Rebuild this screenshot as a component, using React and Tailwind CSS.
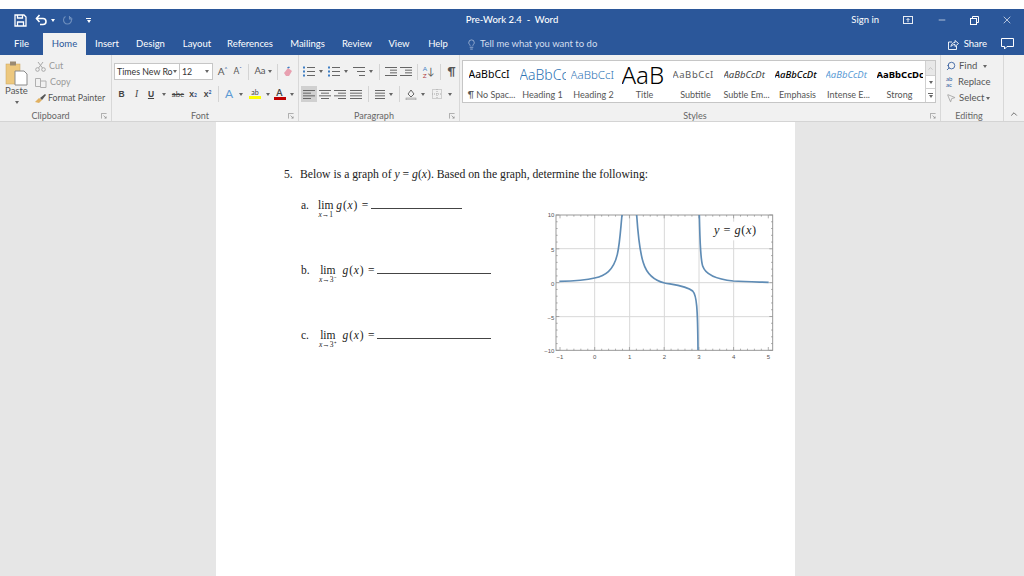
import React from "react";
import { Lightbulb, Search, MousePointer2, ChevronUp, X, Minus } from "lucide-react";

const tabs = [
    ["File", "w-[43px]"],
    ["Home", "w-[43px]"],
    ["Insert", "w-[42px]"],
    ["Design", "w-[45px]"],
    ["Layout", "w-[48px]"],
    ["References", "w-[58px]"],
    ["Mailings", "w-[57px]"],
    ["Review", "w-[42px]"],
    ["View", "w-[42px]"],
    ["Help", "w-[36px]"],
];

const styles = [
    { label: "¶ No Spac...", preview: "AaBbCcI", cls: "text-[10.5px] text-black" },
    { label: "Heading 1", preview: "AaBbCc", cls: "text-[14px] font-light text-[#2e74b5]" },
    { label: "Heading 2", preview: "AaBbCcI", cls: "text-[11.5px] font-light text-[#2e74b5]" },
    { label: "Title", preview: "AaB", cls: "text-[24px] font-light text-black" },
    { label: "Subtitle", preview: "AaBbCcI", cls: "text-[9.5px] tracking-[0.6px] text-[#5a5a5a]" },
    { label: "Subtle Em...", preview: "AaBbCcDt", cls: "text-[9.5px] italic text-[#404040]" },
    { label: "Emphasis", preview: "AaBbCcDt", cls: "text-[9.5px] italic text-black font-medium" },
    { label: "Intense E...", preview: "AaBbCcDt", cls: "text-[9.5px] italic text-[#5b9bd5]" },
    { label: "Strong", preview: "AaBbCcDc", cls: "text-[9.5px] font-bold text-black" },
];

// little stack of text lines, used for the paragraph buttons
function Lines({ widths, align = "left", bullets = false, color = "#666" }) {
    return (
        <svg width="12" height="11" viewBox="0 0 12 11">
            {widths.map((w, i) => {
                const y = 1.5 + i * (8 / (widths.length - 1));
                const x = align === "center" ? (12 - w) / 2 : align === "right" ? 12 - w : 0;
                return <line key={i} x1={bullets ? 4 : x} x2={bullets ? 12 : x + w} y1={y} y2={y} stroke={color} strokeWidth="1" />;
            })}
            {bullets && widths.map((w, i) => (
                <rect key={i} x="0" y={0.5 + i * (8 / (widths.length - 1))} width="2" height="2" fill="#3f7fc4" />
            ))}
        </svg>
    );
}

function Caret({ className = "" }) {
    return <span className={"block w-0 h-0 border-x-[2px] border-t-[3px] border-x-transparent border-t-[#666] " + className}></span>;
}

function Launcher() {
    return (
        <svg width="6" height="6" viewBox="0 0 7 7" fill="none" stroke="#8a8a8a" strokeWidth="0.8">
            <path d="M0.5 6.5v-6h6" />
            <path d="M3 3l3 3M6 4v2H4" />
        </svg>
    );
}

function Cell({ w, children, className = "" }) {
    return <div className={"flex items-center justify-center shrink-0 " + w + " " + className}>{children}</div>;
}

function Sep() {
    return <div className="w-px h-[16px] bg-[#d4d4d4] shrink-0"></div>;
}

function GroupLabel({ name, launcher = true, pad = "pr-[12px]" }) {
    return (
        <div className={"h-[13px] pt-[2px] flex items-center relative text-[9px] text-[#666] justify-center " + pad}>
            {name}
            {launcher && <span className="absolute right-[4px] top-[5px]"><Launcher /></span>}
        </div>
    );
}

function Lim({ sub, mx }) {
    return (
        <span className={"inline-flex flex-col items-center leading-none " + mx}>
            <span className="text-[11.5px]">lim</span>
            <span className="text-[7.5px] -mt-[1px]"><i>x</i>{sub}</span>
        </span>
    );
}

function Question({ letter, sub, line, labelW, mx }) {
    return (
        <div className="flex items-start h-[65px]">
            <span className={"text-[11.5px] leading-none " + labelW}>{letter}</span>
            <Lim sub={sub} mx={mx} />
            <span className="text-[11.5px] leading-none whitespace-nowrap tracking-[0.8px]">
                <i>g</i>(<i>x</i>) =
            </span>
            <span className={"border-b border-[#444] h-[9px] " + line}></span>
        </div>
    );
}

function Graph() {
    const xs = [194, 299, 403, 507, 611];
    const ys = [143, 245, 347];
    const xTicks = [["−1", 90], ["0", 194], ["1", 299], ["2", 403], ["3", 507], ["4", 611], ["5", 715]];
    const yTicks = [["10", 44], ["5", 147], ["0", 249], ["−5", 351], ["−10", 451]];
    return (
        <svg width="260" height="170" viewBox="0 0 780 510">
            {xs.map(x => <line key={x} x1={x} x2={x} y1="42" y2="448" stroke="#d8d8d8" strokeWidth="3" />)}
            {ys.map(y => <line key={y} x1="78" x2="728" y1={y} y2={y} stroke="#d8d8d8" strokeWidth="3" />)}
            <rect x="540" y="62" width="160" height="56" fill="#fff" />
            <rect x="78" y="42" width="650" height="406" fill="none" stroke="#9a9a9a" strokeWidth="3" />
            {Array.from({ length: 31 }, (_, i) => {
                const x = 90 + i * 20.83;
                const big = i % 5 === 0;
                return (
                    <g key={i} stroke="#8a8a8a" strokeWidth="2">
                        <line x1={x} x2={x} y1="42" y2={big ? 52 : 47} />
                        <line x1={x} x2={x} y1="448" y2={big ? 438 : 443} />
                    </g>
                );
            })}
            {Array.from({ length: 21 }, (_, i) => {
                const y = 42 + i * 20.3;
                return (
                    <g key={i} stroke="#8a8a8a" strokeWidth="2">
                        <line x1="78" x2={i % 5 === 0 ? 88 : 83} y1={y} y2={y} />
                        <line x1="728" x2={i % 5 === 0 ? 718 : 723} y1={y} y2={y} />
                    </g>
                );
            })}
            <g fill="none" stroke="#5f8cb5" strokeWidth="5">
                <path d="M88,241 C130,240 170,237 194,231 C225,224 250,210 262,160 C270,125 272,80 276,42" />
                <path d="M320,42 C324,100 328,150 340,185 C352,225 380,240 404,246 C430,251 470,255 488,270 C500,282 503,320 504,447" />
                <path d="M508,42 C510,110 510,170 518,195 C528,225 570,236 610,240 C650,243 690,243 716,244" />
            </g>
            <g fill="#555" fontSize="18" fontFamily="'Liberation Sans', sans-serif">
                {xTicks.map(([t, x]) => <text key={t} x={x} y="474" textAnchor="middle">{t}</text>)}
                {yTicks.map(([t, y]) => <text key={t} x="73" y={y + 5} textAnchor="end">{t}</text>)}
            </g>
            <text x="552" y="100" fontSize="37" letterSpacing="1.5" fill="#222" fontFamily="'Liberation Serif', serif">
                <tspan fontStyle="italic">y</tspan> = <tspan fontStyle="italic">g</tspan>(<tspan fontStyle="italic">x</tspan>)
            </text>
        </svg>
    );
}

export default function App() {
    return (
        <div className="w-[1024px] h-[576px] overflow-hidden bg-white flex flex-col font-['Lato',sans-serif]">
            <div className="h-[9px] bg-white shrink-0"></div>

            {/* title bar */}
            <div className="h-[22px] bg-[#2b579a] text-white grid grid-cols-[1fr_auto_1fr] items-center shrink-0">
                <div className="flex items-center pl-[14px]">
                    <svg width="13" height="13" viewBox="0 0 13 13" fill="none" stroke="#fff" strokeWidth="1.3">
                        <path d="M1 1h9l2 2v9H1z" />
                        <path d="M3.5 12V8h6v4M3.5 1v3h5V1" />
                    </svg>
                    <svg className="ml-[8px]" width="13" height="12" viewBox="0 0 13 12" fill="none" stroke="#fff" strokeWidth="1.6">
                        <path d="M1.5 4.5h6.5a3 3 0 0 1 0 6H5" />
                        <path d="M4.5 1L1.5 4.5 4.5 8" />
                    </svg>
                    <Caret className="ml-[3px] border-t-white" />
                    <svg className="ml-[7px]" width="11" height="11" viewBox="0 0 11 11" fill="none" stroke="#6f8fbd" strokeWidth="1.1">
                        <path d="M7.5 1.5a4 4 0 1 1-4 0M7.5 1v3h3" />
                    </svg>
                    <div className="ml-[13px] flex flex-col items-center gap-[1px]">
                        <span className="w-[5px] h-px bg-white"></span>
                        <Caret className="border-t-white" />
                    </div>
                </div>
                <div className="text-[9.5px] leading-none font-medium whitespace-pre">Pre-Work 2.4  -  Word</div>
                <div className="flex items-center justify-end">
                    <span className="text-[9.5px] mr-[24px]">Sign in</span>
                    <svg className="mr-[24px]" width="10" height="8" viewBox="0 0 11 9" fill="none" stroke="#fff">
                        <rect x="0.5" y="0.5" width="10" height="8" />
                        <path d="M5.5 7V3M3.8 4.5l1.7-1.7 1.7 1.7" />
                    </svg>
                    <Minus className="mr-[23px]" size={10} strokeWidth={1.5} />
                    <svg className="mr-[22px]" width="9" height="9" viewBox="0 0 9 9" fill="none" stroke="#fff">
                        <rect x="0.5" y="2.5" width="6" height="6" />
                        <path d="M2.5 2.5v-2h6v6h-2" />
                    </svg>
                    <X className="mr-[11px]" size={12} strokeWidth={1.3} />
                </div>
            </div>

            {/* tabs */}
            <div className="h-[24px] bg-[#2b579a] flex items-end shrink-0 text-[9.5px]">
                {tabs.map(([name, w]) => (
                    <div key={name} className={w + " flex items-center justify-center " + (name === "Home" ? "h-[22px] bg-[#f1f1f1] text-[#2b579a]" : "h-[22px] text-white")}>
                        {name}
                    </div>
                ))}
                <div className="h-[22px] flex items-center ml-[10px] text-[#d3deee] text-[9.5px]">
                    <Lightbulb size={11} strokeWidth={1.3} className="mr-[3px]" />
                    Tell me what you want to do
                </div>
                <div className="h-[22px] flex items-center ml-auto text-white">
                    <svg width="11" height="11" viewBox="0 0 11 11" fill="none" stroke="#fff" strokeWidth="0.9">
                        <path d="M4 3H.5v7.5h8V7" />
                        <path d="M3 7.5C3 5 5 3.5 7 3.5V1.5l3.5 3-3.5 3V5.5c-1.5 0-3 .5-4 2z" />
                    </svg>
                    <span className="ml-[5px] mr-[14px]">Share</span>
                    <svg className="mr-[10px]" width="13" height="12" viewBox="0 0 13 12" fill="none" stroke="#fff">
                        <path d="M.5.5h12v8H6L3.5 11V8.500H.5z" />
                    </svg>
                </div>
            </div>

            {/* ribbon */}
            <div className="h-[67px] bg-[#f1f1f1] border-b border-[#d4d4d4] flex shrink-0 text-[#555]">
                {/* clipboard */}
                <div className="w-[112px] border-r border-[#d8d8d8] flex flex-col shrink-0">
                    <div className="h-[53px] flex">
                        <div className="w-[33px] flex flex-col items-center pt-[5px]">
                            <svg width="24" height="26" viewBox="0 0 24 26">
                                <rect x="1" y="4" width="14" height="20" fill="#edc87e" stroke="#c9a45e" strokeWidth="0.5" />
                                <rect x="5" y="1.500" width="6" height="4" fill="#9a8a72" />
                                <path d="M10 11h9l3 3v11H10z" fill="#fff" stroke="#8a8a8a" />
                            </svg>
                            <span className="text-[9.5px] leading-none">Paste</span>
                            <Caret className="mt-[5px]" />
                        </div>
                        <div className="flex flex-col text-[9px] pt-[3px] pl-[2px]">
                            <div className="h-[16px] flex items-center text-[#9a9a9a]">
                                <svg className="mr-[3px]" width="11" height="11" viewBox="0 0 11 11" fill="none" stroke="#a8a8a8">
                                    <circle cx="2.500" cy="8.500" r="1.800" /><circle cx="8.500" cy="8.500" r="1.800" />
                                    <path d="M3.500 7L8 1M7.500 7L3 1" />
                                </svg>
                                Cut
                            </div>
                            <div className="h-[16px] flex items-center text-[#9a9a9a]">
                                <svg className="mr-[3px]" width="12" height="11" viewBox="0 0 12 11" fill="none" stroke="#b0b0b0">
                                    <path d="M.5 1.500h5v8h-5zM5.500 4h5.500v6.500H5.500z" />
                                </svg>
                                Copy
                            </div>
                            <div className="h-[16px] flex items-center whitespace-nowrap text-[8.8px]">
                                <svg className="mr-[1px] -ml-[1px]" width="13" height="11" viewBox="0 0 13 11">
                                    <path d="M1 9l4-4 3 2-3 3z" fill="#e0b060" />
                                    <path d="M6 5l5-4 1 1-4 5z" fill="#555" />
                                </svg>
                                Format Painter
                            </div>
                        </div>
                    </div>
                    <GroupLabel name="Clipboard" pad="pr-[10px]" />
                </div>

                {/* font */}
                <div className="w-[187px] border-r border-[#d8d8d8] flex flex-col shrink-0 pl-[2px]">
                    <div className="h-[53px] flex flex-col">
                        <div className="h-[25px] flex items-center pt-[8px]">
                            <div className="w-[66px] h-[17px] bg-white border border-[#c6c6c6] flex items-center justify-between px-[2px] text-[8.8px] text-[#333] whitespace-nowrap">
                                Times New Ro <Caret />
                            </div>
                            <div className="w-[33px] h-[17px] bg-white border border-l-0 border-[#c6c6c6] flex items-center justify-between px-[2px] text-[8.8px] text-[#333]">
                                12 <Caret className="mr-[1px]" />
                            </div>
                            <Cell w="w-[15px] ml-[2px]" className="text-[10px]">A<sup className="text-[5px] text-[#2b579a]">^</sup></Cell>
                            <Cell w="w-[15px]" className="text-[8.5px]">A<sup className="text-[5px] text-[#2b579a]">ˇ</sup></Cell>
                            <div className="w-[7px] flex justify-center"><Sep /></div>
                            <Cell w="w-[22px]" className="text-[9.5px] gap-[2px]">Aa <Caret /></Cell>
                            <div className="w-[7px] flex justify-center"><Sep /></div>
                            <Cell w="w-[14px]">
                                <svg width="11" height="11" viewBox="0 0 11 11">
                                    <path d="M1 7l4-5 4 3-3 5H3z" fill="#e8a0b0" />
                                    <path d="M4 1.500l2-1 1 1-2 1z" fill="#3f7fc4" />
                                </svg>
                            </Cell>
                        </div>
                        <div className="h-[28px] flex items-center pl-[1px] text-[#444] text-[8.5px]">
                            <Cell w="w-[15px] ml-[-1px]" className="font-bold font-['Liberation_Sans',sans-serif]">B</Cell>
                            <Cell w="w-[15px]" className="italic font-['Liberation_Serif',serif] text-[9.5px]">I</Cell>
                            <Cell w="w-[14px]" className="underline font-bold font-['Liberation_Sans',sans-serif]">U</Cell>
                            <Cell w="w-[12px]"><Caret /></Cell>
                            <Cell w="w-[16px]" className="text-[8px] line-through">abc</Cell>
                            <Cell w="w-[14px]" className="font-bold text-[9px]">x<sub className="text-[5px] text-[#2b579a]">2</sub></Cell>
                            <Cell w="w-[15px]" className="font-bold text-[9px]">x<sup className="text-[5px] text-[#2b579a]">2</sup></Cell>
                            <div className="w-[7px] flex justify-center"><Sep /></div>
                            <Cell w="w-[14px]" className="text-[12px] text-[#5b9bd5] leading-none">A</Cell>
                            <Cell w="w-[9px]"><Caret /></Cell>
                            <Cell w="w-[16px] ml-[2px]">
                                <div className="flex flex-col items-center leading-none">
                                    <span className="text-[7px] underline">ab</span>
                                    <span className="w-[12px] h-[3px] bg-[#ffff00]"></span>
                                </div>
                            </Cell>
                            <Cell w="w-[9px]"><Caret /></Cell>
                            <Cell w="w-[15px]">
                                <div className="flex flex-col items-center leading-none">
                                    <span className="text-[9px] font-bold">A</span>
                                    <span className="w-[12px] h-[3px] bg-[#c00000]"></span>
                                </div>
                            </Cell>
                            <Cell w="w-[9px]"><Caret /></Cell>
                        </div>
                    </div>
                    <GroupLabel name="Font" />
                </div>

                {/* paragraph */}
                <div className="w-[161px] border-r border-[#d8d8d8] flex flex-col shrink-0 pl-[2px]">
                    <div className="h-[53px] flex flex-col">
                        <div className="h-[25px] flex items-center pt-[8px]">
                            <Cell w="w-[16px]"><Lines widths={[12, 12, 12]} bullets /></Cell>
                            <Cell w="w-[8px]"><Caret /></Cell>
                            <Cell w="w-[16px] ml-[1px]"><Lines widths={[12, 12, 12]} bullets /></Cell>
                            <Cell w="w-[8px]"><Caret /></Cell>
                            <Cell w="w-[16px] ml-[1px]"><Lines widths={[12, 8, 6]} align="right" /></Cell>
                            <Cell w="w-[8px]"><Caret /></Cell>
                            <div className="w-[9px] flex justify-center"><Sep /></div>
                            <Cell w="w-[15px]"><Lines widths={[12, 7, 7, 12]} align="right" /></Cell>
                            <Cell w="w-[15px]"><Lines widths={[12, 7, 7, 12]} align="right" /></Cell>
                            <div className="w-[8px] flex justify-center"><Sep /></div>
                            <Cell w="w-[15px]" className="text-[6.5px] leading-[7px] text-[#3f7fc4]">
                                <span className="flex flex-col"><span>A</span><span className="text-[#b04040]">Z</span></span>
                                <span className="text-[10px] text-[#555]">↓</span>
                            </Cell>
                            <div className="w-[8px] flex justify-center"><Sep /></div>
                            <Cell w="w-[15px]" className="text-[11px] font-bold">¶</Cell>
                        </div>
                        <div className="h-[28px] flex items-center">
                            <Cell w="w-[16px] h-[16px] bg-[#d0d0d0]"><Lines widths={[12, 8, 12, 8]} /></Cell>
                            <Cell w="w-[15px]"><Lines widths={[12, 8, 12, 8]} align="center" /></Cell>
                            <Cell w="w-[16px]"><Lines widths={[12, 8, 12, 8]} align="right" /></Cell>
                            <Cell w="w-[16px]"><Lines widths={[12, 12, 12, 12]} /></Cell>
                            <div className="w-[8px] flex justify-center"><Sep /></div>
                            <Cell w="w-[14px]"><Lines widths={[10, 10, 10, 10]} align="right" /></Cell>
                            <Cell w="w-[9px]"><Caret /></Cell>
                            <div className="w-[8px] flex justify-center"><Sep /></div>
                            <Cell w="w-[16px]">
                                <svg width="12" height="12" viewBox="0 0 12 12">
                                    <path d="M3 6l3-4 3 4-3 3z" fill="none" stroke="#666" />
                                    <rect x="1" y="10" width="10" height="2" fill="#d8d8d8" stroke="#888" strokeWidth="0.5" />
                                </svg>
                            </Cell>
                            <Cell w="w-[8px]"><Caret /></Cell>
                            <Cell w="w-[16px] ml-[2px]">
                                <svg width="10" height="10" viewBox="0 0 10 10" fill="none" stroke="#aaa" strokeDasharray="1 1">
                                    <rect x="0.5" y="0.5" width="9" height="9" /><path d="M5 0v10M0 5h10" />
                                </svg>
                            </Cell>
                            <Cell w="w-[10px]"><Caret /></Cell>
                        </div>
                    </div>
                    <GroupLabel name="Paragraph" />
                </div>

                {/* styles */}
                <div className="w-[481px] border-r border-[#d8d8d8] flex flex-col shrink-0 pl-[2px]">
                    <div className="h-[53px] pt-[5px]">
                        <div className="w-[474px] h-[43px] bg-white border border-[#c6c6c6] flex">
                            <div className="flex-1 flex pl-[3px]">
                                {styles.map(s => (
                                    <div key={s.label} className="w-[51px] flex flex-col items-center overflow-hidden">
                                        <div className="h-[27px] flex items-center w-[46px] overflow-hidden whitespace-nowrap">
                                            <span className={"font-['Noto_Sans',sans-serif] leading-none " + s.cls}>{s.preview}</span>
                                        </div>
                                        <div className="text-[9px] leading-none mt-[2px] text-[#555] whitespace-nowrap">{s.label}</div>
                                    </div>
                                ))}
                            </div>
                            <div className="w-[11px] border-l border-[#d0d0d0] flex flex-col">
                                <div className="h-[14px] bg-[#e8e8e8] flex items-center justify-center"><ChevronUp size={7} className="text-[#aaa]" /></div>
                                <div className="h-[14px] border-y border-[#d0d0d0] flex items-center justify-center"><Caret /></div>
                                <div className="flex-1 flex flex-col items-center justify-center gap-[1px]">
                                    <span className="w-[5px] h-px bg-[#666]"></span>
                                    <Caret />
                                </div>
                            </div>
                        </div>
                    </div>
                    <GroupLabel name="Styles" />
                </div>

                {/* editing */}
                <div className="w-[63px] border-r border-[#d8d8d8] flex flex-col shrink-0">
                    <div className="h-[53px] flex flex-col pl-[5px] pt-[3px] text-[9.5px]">
                        <div className="h-[16px] flex items-center">
                            <Search size={10} className="mr-[3px] text-[#2b579a] -scale-x-100" strokeWidth={2} />
                            Find
                            <Caret className="ml-[6px]" />
                        </div>
                        <div className="h-[16px] flex items-center">
                            <span className="flex flex-col text-[6px] leading-[6px] text-[#2b579a] mr-[1px] w-[11px] h-[12px]">
                                <span>ab</span>
                                <span>ac</span>
                            </span>
                            Replace
                        </div>
                        <div className="h-[16px] flex items-center">
                            <MousePointer2 size={10} className="mr-[3px]" strokeWidth={1} />
                            Select
                            <Caret className="ml-[2px]" />
                        </div>
                    </div>
                    <GroupLabel name="Editing" launcher={false} pad="pr-[6px]" />
                </div>
                <div className="flex-1 flex items-end justify-center pb-[2px]">
                    <ChevronUp size={10} strokeWidth={2} />
                </div>
            </div>

            {/* document */}
            <div className="flex-1 bg-[#e6e6e6] flex pl-[216px] min-h-0">
                <div className="w-[579px] h-full bg-white pl-[68px] pt-[46px] text-[#222] font-['Liberation_Serif',serif]">
                    <div className="flex text-[11.7px] leading-[14px] whitespace-nowrap">
                        <span className="w-[16px]">5.</span>
                        <span>Below is a graph of <i>y</i> = <i>g</i>(<i>x</i>). Based on the graph, determine the following:</span>
                    </div>
                    <div className="flex mt-[9px]">
                        <div className="w-[246px] shrink-0 pl-[17px] pt-[9px]">
                            <Question letter="a." sub="→1" line="w-[91px] ml-[2px]" labelW="w-[10px]" mx="ml-[7px] mr-[3px]" />
                            <Question letter="b." sub="→3⁻" line="w-[114px] ml-[2px]" labelW="w-[12px]" mx="mx-[6px]" />
                            <Question letter="c." sub="→3⁺" line="w-[114px] ml-[2px]" labelW="w-[12px]" mx="mx-[6px]" />
                        </div>
                        <div className="mt-[10px]">
                            <Graph />
                        </div>
                    </div>
                </div>
            </div>
        </div>
    );
}
